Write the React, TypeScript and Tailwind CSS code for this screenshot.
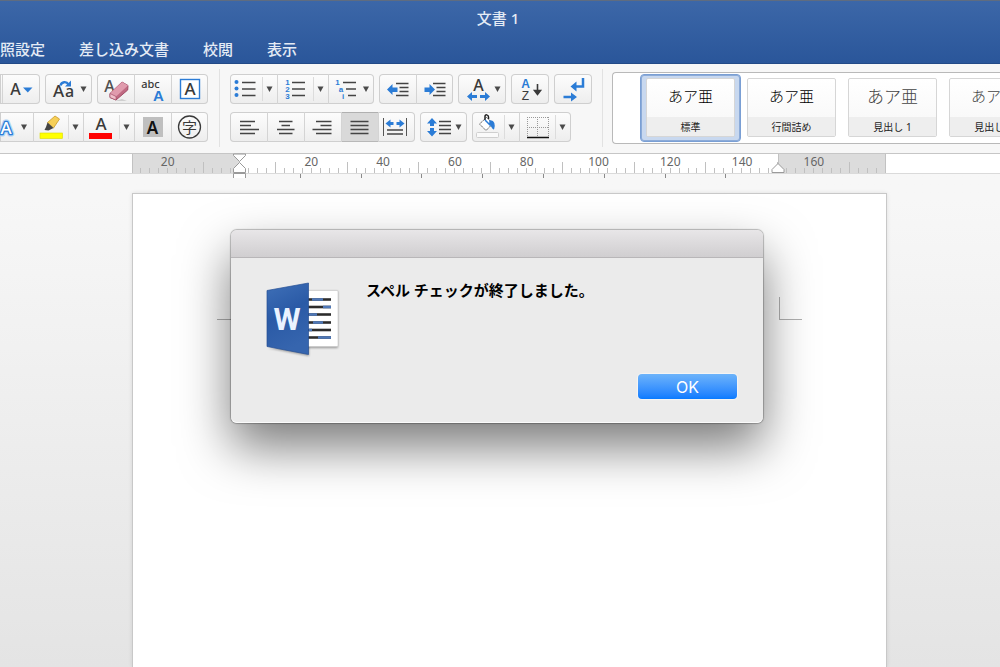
import React, { ReactNode } from "react";
import clsx from "clsx";

const BLUE = "#2b7cd6";
const INK = "#3a3a3a";

const TABS = ["照設定", "差し込み文書", "校閲", "表示"];

const STYLES = [
  { name: "標準", sample: "text-[15px] font-light text-black", selected: true },
  { name: "行間詰め", sample: "text-[15px] font-light text-black" },
  { name: "見出し 1", sample: "text-[17px] font-light text-[#444]" },
  { name: "見出し 2", sample: "text-[15px] font-light text-[#444]" },
];

interface ToolProps {
  label: string;
  width: number;
  children: ReactNode;
  active?: boolean;
}

const Tool = ({ label, width, children, active }: ToolProps) => (
  <button
    type="button"
    aria-label={label}
    aria-pressed={active}
    className={clsx(
      "block shrink-0 border-[#d4d4d4] not-first:border-l",
      active && "border-[#b4b4b4] bg-[#d9d9d9] shadow-[inset_0_1px_0_#b0b0b0,inset_0_-1px_0_#b8b8b8]",
    )}
    style={{ width }}
  >
    <svg width={width} height={30} className="block overflow-visible">
      {children}
    </svg>
  </button>
);

const CaretMark = ({ x }: { x: number }) => (
  <path d={`M${x - 3} 12.5h6l-3 5.5z`} fill="#4a4a4a" />
);

const Caret = ({ label, width = 15 }: { label: string; width?: number }) => (
  <button type="button" aria-label={label} className="block shrink-0" style={{ width }}>
    <svg width={width} height={30} className="block">
      <path d="M0.5 3v24" stroke="#dcdcdc" />
      <CaretMark x={7.5} />
    </svg>
  </button>
);

const Group = ({ children, open }: { children: ReactNode; open?: boolean }) => (
  <div
    className={clsx(
      "flex h-[30px] overflow-hidden bg-linear-to-b from-[#fdfdfd] to-[#ededed] shadow-[inset_0_0_0_1px_#cfcfcf]",
      open ? "rounded-r" : "rounded",
    )}
  >
    {children}
  </div>
);

interface GlyphProps {
  x: number;
  y: number;
  size?: number;
  fill?: string;
  weight?: number;
  font?: string;
  children: string;
}

const Glyph = ({ x, y, size = 16, fill = INK, weight = 500, font, children }: GlyphProps) => (
  <text x={x} y={y} fontSize={size} fill={fill} fontWeight={weight} fontFamily={font} textAnchor="middle">
    {children}
  </text>
);

const Marker = ({ x, y, children }: { x: number; y: number; children: string }) => (
  <Glyph x={x} y={y} size={8} fill={BLUE} weight={700} font="Liberation Sans, sans-serif">
    {children}
  </Glyph>
);

// each row is [x1, x2, y]
const Lines = ({ rows }: { rows: number[][] }) => (
  <g stroke="#444" strokeWidth={1.5}>
    {rows.map(([x1, x2, y]) => (
      <line key={y} x1={x1} x2={x2} y1={y} y2={y} />
    ))}
  </g>
);

const FontTools = () => (
  <div className="flex flex-col gap-2 border-r border-[#e2e2e2] py-[5px] pr-[11px]">
    <div className="flex gap-[5px]">
      <Group open>
        <Tool label="フォントの縮小" width={40}>
          <path d="M2.5 1v28" stroke="#d4d4d4" />
          <Glyph x={15.5} y={21} size={16}>A</Glyph>
          <path d="M23 13.5h9.5l-4.7 5z" fill={BLUE} />
        </Tool>
      </Group>
      <Group>
        <Tool label="文字種の変換" width={47}>
          <Glyph x={13.5} y={23} size={17}>A</Glyph>
          <Glyph x={24.5} y={23} size={16}>a</Glyph>
          <path d="M15.5 11.5c1-4 6-4.5 8-1" fill="none" stroke={BLUE} strokeWidth={2.4} />
          <path d="M20 12.5h6V6.5z" fill={BLUE} />
          <CaretMark x={38.5} />
        </Tool>
      </Group>
      <Group>
        <Tool label="書式のクリア" width={37}>
          <Glyph x={12.5} y={18} size={16} fill="#505050">A</Glyph>
          <path d="M18 27h12l-5-2z" fill="#cfcfcf" />
          <path d="M13 19.5L25 8l6 3.5-.3 4.5L19 26l-6-2.5z" fill="#c06a82" stroke="#a14c66" />
          <path d="M13 19.5L25 8l6 3.5-12 11z" fill="#e09bad" />
          <path d="M13 19.5l6 3V26l-6-2.5z" fill="#efc0cb" stroke="#a14c66" strokeWidth={0.6} />
        </Tool>
        <Tool label="ルビ" width={37}>
          <Glyph x={15.5} y={14} size={11}>abc</Glyph>
          <Glyph x={23.5} y={27} size={15} fill={BLUE} weight={700} font="Liberation Sans, sans-serif">A</Glyph>
        </Tool>
        <Tool label="囲み線" width={37}>
          <rect x={8.5} y={5.5} width={19} height={19} fill="#fff" stroke={BLUE} strokeWidth={1.4} />
          <Glyph x={18} y={21} size={17}>A</Glyph>
        </Tool>
      </Group>
    </div>
    <div className="flex gap-[5px]">
      <Group open>
        <Tool label="文字の効果" width={33}>
          <text x={6} y={21.5} fontSize={17} fontWeight={500} textAnchor="middle" fill="#fff" stroke="#b3d4f5" strokeWidth={5} strokeLinejoin="round" paintOrder="stroke">A</text>
          <text x={6} y={21.5} fontSize={17} fontWeight={500} textAnchor="middle" fill="#fff" stroke={BLUE} strokeWidth={2.6} strokeLinejoin="round" paintOrder="stroke">A</text>
          <CaretMark x={24} />
        </Tool>
        <Tool label="蛍光ペン" width={35}>
          <rect x={6} y={21} width={22.5} height={5.5} fill="#ff0" stroke="#d9d900" strokeWidth={0.6} />
          <path d="M13.5 10.5L21 4l4.5 3-6 9z" fill="#f6cf57" stroke="#c99a2c" strokeWidth={0.8} />
          <path d="M13.5 10.5l6 5.5-3 1.5-2 1-4-.5 1.5-3z" fill="#444" />
        </Tool>
        <Caret label="蛍光ペンの色" />
        <Tool label="フォントの色" width={36}>
          <Glyph x={17} y={18} size={17}>A</Glyph>
          <rect x={5} y={21} width={23} height={6} fill="#f00" />
        </Tool>
        <Caret label="フォントの色の選択" />
        <Tool label="文字の網かけ" width={37}>
          <rect x={8} y={5} width={20} height={20} fill="#bfbfbf" />
          <Glyph x={17.5} y={21.5} size={17} fill="#111" weight={600}>A</Glyph>
        </Tool>
        <Tool label="囲い文字" width={37}>
          <circle cx={17.5} cy={15} r={11} fill="none" stroke={INK} strokeWidth={1.3} />
          <Glyph x={17.5} y={20.5} size={15} weight={400}>字</Glyph>
        </Tool>
      </Group>
    </div>
  </div>
);

const ParagraphTools = () => (
  <div className="flex flex-col gap-2 border-r border-[#e2e2e2] px-[10px] py-[5px]">
    <div className="flex gap-[5px]">
      <Group>
        <Tool label="箇条書き" width={32}>
          {[8, 14.5, 21].map((y) => (
            <circle key={y} cx={6.5} cy={y} r={2} fill={BLUE} />
          ))}
          <Lines rows={[[12, 25.5, 8.5], [12, 25.5, 15], [12, 25.5, 21.5]]} />
        </Tool>
        <Caret label="行頭文字" />
        <Tool label="段落番号" width={36}>
          <Marker x={9.5} y={10.5}>1</Marker>
          <Marker x={9.5} y={17.5}>2</Marker>
          <Marker x={9.5} y={24.5}>3</Marker>
          <Lines rows={[[14, 27, 8.5], [14, 27, 15], [14, 27, 21.5]]} />
        </Tool>
        <Caret label="番号書式" />
        <Tool label="アウトライン" width={46}>
          <Marker x={8.5} y={10.5}>1</Marker>
          <Marker x={12} y={17.5}>a</Marker>
          <Marker x={14} y={24.5}>i</Marker>
          <Lines rows={[[14, 27, 8.5], [17, 27, 15], [19, 27, 21.5]]} />
          <CaretMark x={37} />
        </Tool>
      </Group>
      <Group>
        <Tool label="インデントを減らす" width={37}>
          <path d="M8 15.5l5.5-5.5v3.5h5v4.5h-5V21z" fill={BLUE} />
          <Lines rows={[[17, 29.5, 9.5], [20.5, 29.5, 13.5], [20.5, 29.5, 17.5], [17, 29.5, 21.5]]} />
        </Tool>
        <Tool label="インデントを増やす" width={37}>
          <path d="M18 15.5L12.5 10v3.5h-5v4.5h5V21z" fill={BLUE} />
          <Lines rows={[[16, 28.5, 9.5], [19.5, 28.5, 13.5], [19.5, 28.5, 17.5], [16, 28.5, 21.5]]} />
        </Tool>
      </Group>
      <Group>
        <Tool label="拡張書式" width={48}>
          <Glyph x={20.5} y={17} size={16}>A</Glyph>
          <path d="M9 22.5l5-4.5v3h5v3h-5v3z" fill={BLUE} />
          <path d="M32 22.5l-5-4.5v3h-5v3h5v3z" fill={BLUE} />
          <CaretMark x={39.5} />
        </Tool>
      </Group>
      <Group>
        <Tool label="並べ替え" width={38}>
          <Glyph x={14.5} y={14} size={12} fill={BLUE} weight={700} font="Liberation Sans, sans-serif">A</Glyph>
          <Glyph x={14.5} y={26} size={12} weight={400} font="Liberation Sans, sans-serif">Z</Glyph>
          <path d="M26.5 10v8M23.5 16.5l3 4 3-4z" fill={INK} stroke={INK} strokeWidth={1.6} />
        </Tool>
      </Group>
      <Group>
        <Tool label="編集記号の表示" width={38}>
          <path d="M29 4v8.5h-8" fill="none" stroke={BLUE} strokeWidth={2.5} />
          <path d="M16.5 12.5l6-5v10zM23 23l-6-4.5v9z" fill={BLUE} />
          <path d="M9.5 23h8" stroke={BLUE} strokeWidth={2.5} />
        </Tool>
      </Group>
    </div>
    <div className="flex gap-[5px]">
      <Group>
        <Tool label="左揃え" width={37}>
          <Lines rows={[[10, 25, 9.5], [10, 21, 13.5], [10, 29, 17.5], [10, 25, 21.5]]} />
        </Tool>
        <Tool label="中央揃え" width={37}>
          <Lines rows={[[11, 24.5, 9.5], [13.5, 22, 13.5], [9, 26.5, 17.5], [11, 24.5, 21.5]]} />
        </Tool>
        <Tool label="右揃え" width={37}>
          <Lines rows={[[11, 26.5, 9.5], [15.5, 26.5, 13.5], [7.5, 26.5, 17.5], [11, 26.5, 21.5]]} />
        </Tool>
        <Tool label="両端揃え" width={37} active>
          <Lines rows={[[8.5, 26.5, 9.5], [8.5, 26.5, 13.5], [8.5, 26.5, 17.5], [8.5, 26.5, 21.5]]} />
        </Tool>
        <Tool label="均等割り付け" width={37}>
          <path d="M4.5 6v18M27.5 6v18" stroke="#555" />
          <path d="M6.5 11.5l5-4v2.5h3v3h-3v2.5zM25.5 11.5l-5-4v2.5h-3v3h3v2.5z" fill={BLUE} />
          <Lines rows={[[8, 24, 18], [8, 24, 22]]} />
        </Tool>
      </Group>
      <Group>
        <Tool label="行間" width={47}>
          <path d="M12 6l-5 5.5h3V14h4v-2.500h3zM12 24.5l-5-5.500h3v-3h4v3h3z" fill={BLUE} />
          <Lines rows={[[19, 31, 9.5], [19, 31, 13.5], [19, 31, 17.5], [19, 31, 21.5]]} />
          <CaretMark x={38.5} />
        </Tool>
      </Group>
      <Group>
        <Tool label="網かけ" width={32}>
          <path d="M7.5 12l7-6.5 6.5 6-7 7z" fill="#fff" stroke="#555" strokeDasharray="1.5 .7" />
          <path d="M13 8V4.5c0-2.5 3.5-2 3.5.5v2" fill="none" stroke="#222" strokeWidth={1.5} />
          <path d="M13 8l5.5 5.5M18 9c4-.5 4.5 4 3.5 7.5-1.8-1-1.5-3.5-3.5-4z" fill={BLUE} stroke={BLUE} strokeWidth={1.5} />
          <rect x={4.5} y={20.5} width={22} height={5} rx={1} fill="#fafafa" stroke="#cfcfcf" />
        </Tool>
        <Caret label="網かけの色" />
        <Tool label="罫線" width={36}>
          <path d="M7 5.5h22M7 15.5h22M7.5 5v20M17.5 5v20M28.5 5v20" stroke="#999" strokeDasharray="1 1" shapeRendering="crispEdges" />
          <path d="M7 25.5h22" stroke="#111" strokeWidth={1.4} />
        </Tool>
        <Caret label="罫線の種類" width={16} />
      </Group>
    </div>
  </div>
);

const StyleGallery = () => (
  <div className="my-[3px] ml-[9px] flex min-w-0 flex-1 items-start overflow-hidden rounded-l border border-r-0 border-[#b9b9b9] bg-white pt-px pl-[27px]">
    {STYLES.map(({ name, sample, selected }) => (
      <button
        key={name}
        type="button"
        aria-pressed={!!selected}
        className={clsx(
          "h-[68px] w-[101px] shrink-0 rounded border px-[5px] pt-[3px] pb-1",
          selected ? "border-[#7a9fd4] bg-[#c8d8ef] shadow-[inset_0_0_0_1px_#8cabd8]" : "border-transparent",
        )}
      >
        <span className="flex h-full flex-col rounded-xs border border-[#d6d6d6] bg-linear-to-b from-white to-[#f6f6f6]">
          <span className={clsx("flex h-[38px] items-center justify-center pb-[3px] leading-none", sample)}>
            あア亜
          </span>
          <span className="flex flex-1 items-center justify-center bg-[#eeeeee] text-[10px] leading-none text-[#222]">
            {name}
          </span>
        </span>
      </button>
    ))}
  </div>
);

const RULER_ORIGIN = 108;
const TICK = 8.97;

const Ruler = () => {
  const ticks = Array.from({ length: 83 }, (_, i) => i - 11);
  return (
    <div className="flex h-[21px] justify-center border-y border-t-[#c6c6c6] border-b-[#dadada] bg-white pl-[19px]">
      <svg width={755} height={19} className="block shrink-0 overflow-visible" fontSize={12}>
        <rect width={RULER_ORIGIN} height={19} fill="#dcdcdc" />
        <rect x={646} width={108} height={19} fill="#dcdcdc" />
        <path d="M0.5 0v19M753.5 0v19M646.5 0v19" stroke="#c2c2c2" />
        {ticks.map((i) => {
          const x = Math.round(RULER_ORIGIN + i * TICK) - 0.5;
          if (i === 0) return null;
          // labels sit on every eighth tick, the long marks fall between them
          const long = Math.abs(i) % 8 === 4;
          return <line key={i} x1={x} x2={x} y1={long ? 8 : 14} y2={19} stroke="#c0c0c0" />;
        })}
        {[-20, 20, 40, 60, 80, 100, 120, 140, 160].map((n) => (
          <text key={n} x={RULER_ORIGIN - 0.5 + (n / 20) * 71.8} y={12} textAnchor="middle" fill="#666">
            {Math.abs(n)}
          </text>
        ))}
        {[1, 2, 3, 4, 5, 6, 7, 8].map((n) => {
          const x = Math.round(RULER_ORIGIN + n * 60.8) - 0.5;
          return <line key={n} x1={x} x2={x} y1={20} y2={24} stroke="#8a8a8a" />;
        })}
        <g fill="#fff" stroke="#9a9a9a">
          <path d="M101.5 0v1.5l6 6 6-6V0z" />
          <path d="M101.5 18.5v-4l6-6 6 6v4z" />
          <path d="M101.5 24v-4.5h12V24" />
          <path d="M640 18.5v-3l6-6 6 6v3z" />
        </g>
      </svg>
    </div>
  );
};

const WordIcon = () => (
  <svg width={76} height={76} viewBox="0 0 76 76" className="shrink-0" aria-hidden="true">
    <defs>
      <linearGradient id="cover" x1="0" y1="0" x2="0.3" y2="1">
        <stop offset="0" stopColor="#3f70b8" />
        <stop offset="0.5" stopColor="#2a5aa6" />
        <stop offset="1" stopColor="#3665ae" />
      </linearGradient>
      <filter id="soft" x="-20%" y="-20%" width="140%" height="140%">
        <feGaussianBlur stdDeviation="1.2" />
      </filter>
    </defs>
    <path d="M2 66l41 8V64z" fill="#000" opacity={0.35} filter="url(#soft)" />
    <rect x={38} y={9} width={34} height={57} rx={1} fill="#000" opacity={0.35} filter="url(#soft)" />
    <rect x={38} y={8.5} width={34} height={56} rx={1} fill="#fff" stroke="#c8c8c8" strokeWidth={0.6} />
    {[17.5, 25, 32.5, 40.5, 48, 55.5].map((y, i) => (
      <g key={y} strokeWidth={2.6}>
        <line x1={42} x2={65} y1={y} y2={y} stroke="#2c2c2c" />
        <line x1={[46, 57, 43, 47, 43, 52][i]} x2={[57, 65, 51, 57, 46, 65][i]} y1={y} y2={y} stroke="#4f78b8" />
      </g>
    ))}
    <path d="M1 8.5L42.5 1v71.5L1 64.5z" fill="url(#cover)" stroke="#254f94" strokeWidth={0.7} />
    <text x={21} y={47.5} fontSize={31} fontWeight={700} fontFamily="Roboto, sans-serif" textAnchor="middle" fill="#eaf2ff">W</text>
  </svg>
);

const SpellCheckDialog = () => (
  <div className="absolute inset-x-0 top-[230px] flex justify-center pr-[6px]">
    <div
      role="alertdialog"
      aria-labelledby="message"
      className="w-[532px] rounded-md bg-[#ebebeb] shadow-[inset_0_-1px_0_#fafafa,0_0_1px_1px_rgba(0,0,0,0.25),0_24px_50px_0_rgba(0,0,0,0.52)]"
    >
      <div className="h-7 rounded-t-md border-b border-[#b8b6b8] bg-linear-to-b from-[#e8e6e8] to-[#d0ced0]" />
      <div className="flex gap-6 pt-6 pl-[35px]">
        <WordIcon />
        <p id="message" className="text-[15px] leading-4 font-bold text-black">
          スペル チェックが終了しました。
        </p>
      </div>
      <div className="flex justify-end pt-4 pr-[26px] pb-6">
        <button
          type="button"
          className="h-[25px] w-[99px] rounded bg-linear-to-b from-[#6cb3fa] to-[#067aff] font-[Inter,sans-serif] text-base leading-none text-white shadow-[0_0_1px_1px_rgba(255,255,255,0.5)]"
        >
          OK
        </button>
      </div>
    </div>
  </div>
);

export default function App() {
  return (
    <div
      lang="ja"
      className="relative flex min-h-screen flex-col overflow-hidden bg-linear-to-b from-[#f7f7f7] from-30% to-[#e4e4e4] font-['Noto_Sans','Noto_Sans_CJK_JP',sans-serif]"
    >
      <header className="h-16 border-t border-b border-t-[#5f6c80] border-b-[#234a87] bg-linear-to-b from-[#3c67a8] to-[#2a569a] text-[#e4ebf5]">
        <h1 className="pt-[7px] pr-1 text-center text-[15px] leading-5 font-medium">文書 1</h1>
        <nav className="flex gap-[34px] pt-[11px] text-[15px] leading-5 font-medium">
          {TABS.map((tab) => (
            <a key={tab} href="#">
              {tab}
            </a>
          ))}
        </nav>
      </header>
      <div className="flex bg-[#f7f7f7] pt-[5px] pb-[6px]">
        <FontTools />
        <ParagraphTools />
        <StyleGallery />
      </div>
      <Ruler />
      <main className="flex flex-1 justify-center pt-[19px] pl-[19px]">
        <div className="flex w-[755px] shrink-0 items-start justify-between border border-b-0 border-[#c8c8c8] bg-white px-[84px] pt-[103px] shadow-[0_0_4px_rgba(0,0,0,0.1)]">
          <div className="size-[23px] border-r border-b border-[#b0b0b0]" />
          <div className="size-[23px] border-b border-l border-[#b0b0b0]" />
        </div>
      </main>
      <SpellCheckDialog />
    </div>
  );
}
